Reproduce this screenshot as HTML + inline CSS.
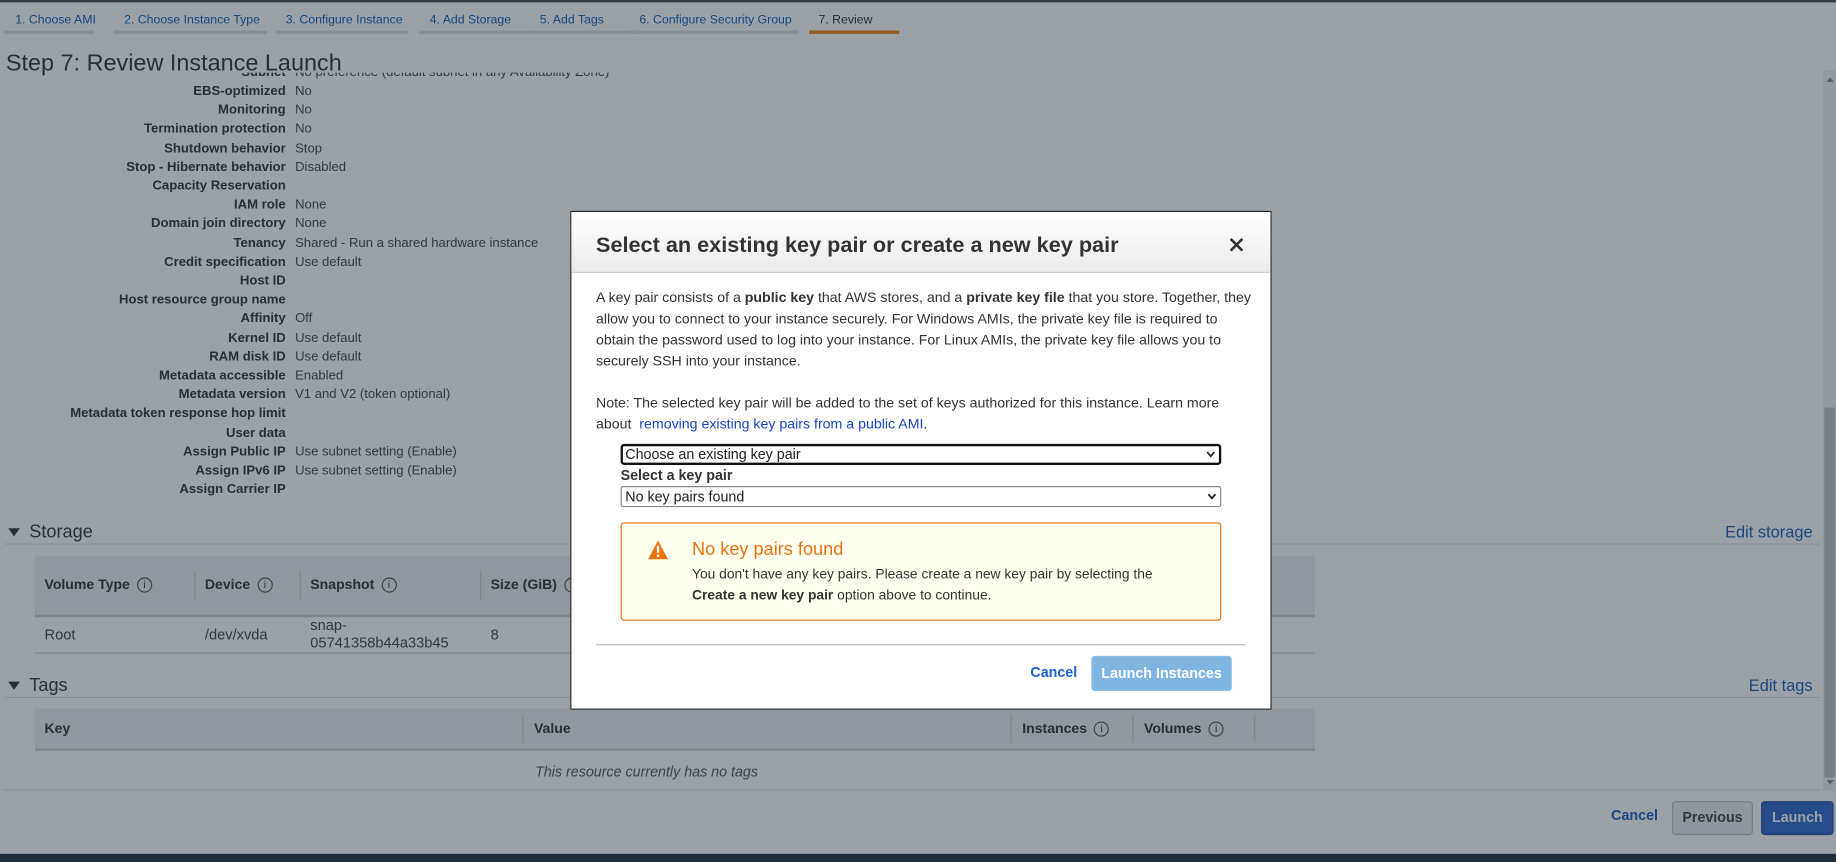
<!DOCTYPE html>
<html><head><meta charset="utf-8"><style>
html,body{margin:0;padding:0;width:1836px;height:862px;overflow:hidden;background:#9ca1a8;}
#w{position:absolute;left:0;top:0;width:1568px;height:736px;transform:scale(1.17092,1.17120);transform-origin:0 0;background:#fff;font-family:"Liberation Sans",Arial,sans-serif;color:#333;overflow:hidden}
.a{position:absolute;white-space:nowrap}
.tab{position:absolute;top:4px;height:25px;border-bottom:3px solid #ddd;font-size:10.5px;color:#0b5fb8;line-height:26px;white-space:nowrap;box-sizing:border-box;padding-left:9px}
.lbl{position:absolute;left:0;width:244px;text-align:right;font-size:11.2px;font-weight:bold;color:#333;white-space:nowrap}
.val{position:absolute;left:252px;font-size:11.2px;color:#444;white-space:nowrap}
.th{position:absolute;font-size:12px;font-weight:bold;color:#333}
.i{display:inline-block;width:11px;height:11px;border:1px solid #555;border-radius:50%;font-size:9px;line-height:11px;text-align:center;font-weight:normal;margin-left:6px;vertical-align:middle}
.sep{position:absolute;width:1px;background:#ccc}
#ov{position:absolute;left:0;top:0;width:1568px;height:736px;background:rgba(30,42,58,.44)}
.m{font-size:12.1px;line-height:18px;color:#333}
</style></head><body><div id="w">
<div class="a" style="left:0;top:0;width:1568px;height:2px;background:#444"></div>
<div class="tab" style="left:3px;width:77px;padding-left:10px">1. Choose AMI</div>
<div class="tab" style="left:97px;width:131px">2. Choose Instance Type</div>
<div class="tab" style="left:236px;width:113px;padding-left:8px">3. Configure Instance</div>
<div class="tab" style="left:358px;width:97px;padding-left:9px">4. Add Storage</div>
<div class="tab" style="left:452px;width:95px;padding-left:9px">5. Add Tags</div>
<div class="tab" style="left:537px;width:145px;padding-left:9px">6. Configure Security Group</div>
<div class="tab" style="left:691px;width:77px;border-bottom-color:#e88b14;color:#333;padding-left:8px">7. Review</div>
<div class="a" style="left:0;top:62px;width:1556px;height:8px;overflow:hidden">
<div class="lbl" style="top:-6px">Subnet</div><div class="val" style="top:-6px">No preference (default subnet in any Availability Zone)</div>
</div>
<div class="a" style="left:5px;top:43px;font-size:20px;color:#333">Step 7: Review Instance Launch</div>
<div class="lbl" style="top:72px">EBS-optimized</div><div class="val" style="top:72px">No</div>
<div class="lbl" style="top:88px">Monitoring</div><div class="val" style="top:88px">No</div>
<div class="lbl" style="top:104px">Termination protection</div><div class="val" style="top:104px">No</div>
<div class="lbl" style="top:121px">Shutdown behavior</div><div class="val" style="top:121px">Stop</div>
<div class="lbl" style="top:137px">Stop - Hibernate behavior</div><div class="val" style="top:137px">Disabled</div>
<div class="lbl" style="top:153px">Capacity Reservation</div>
<div class="lbl" style="top:169px">IAM role</div><div class="val" style="top:169px">None</div>
<div class="lbl" style="top:185px">Domain join directory</div><div class="val" style="top:185px">None</div>
<div class="lbl" style="top:202px">Tenancy</div><div class="val" style="top:202px">Shared - Run a shared hardware instance</div>
<div class="lbl" style="top:218px">Credit specification</div><div class="val" style="top:218px">Use default</div>
<div class="lbl" style="top:234px">Host ID</div>
<div class="lbl" style="top:250px">Host resource group name</div>
<div class="lbl" style="top:266px">Affinity</div><div class="val" style="top:266px">Off</div>
<div class="lbl" style="top:283px">Kernel ID</div><div class="val" style="top:283px">Use default</div>
<div class="lbl" style="top:299px">RAM disk ID</div><div class="val" style="top:299px">Use default</div>
<div class="lbl" style="top:315px">Metadata accessible</div><div class="val" style="top:315px">Enabled</div>
<div class="lbl" style="top:331px">Metadata version</div><div class="val" style="top:331px">V1 and V2 (token optional)</div>
<div class="lbl" style="top:347px">Metadata token response hop limit</div>
<div class="lbl" style="top:364px">User data</div>
<div class="lbl" style="top:380px">Assign Public IP</div><div class="val" style="top:380px">Use subnet setting (Enable)</div>
<div class="lbl" style="top:396px">Assign IPv6 IP</div><div class="val" style="top:396px">Use subnet setting (Enable)</div>
<div class="lbl" style="top:412px">Assign Carrier IP</div>
<!-- storage -->
<div class="a" style="left:7px;top:451px;width:0;height:0;border-left:5px solid transparent;border-right:5px solid transparent;border-top:7px solid #333"></div>
<div class="a" style="left:25px;top:446px;font-size:15.5px;color:#333">Storage</div>
<div class="a" style="right:20px;top:446px;font-size:14px;color:#1a5fb4">Edit storage</div>
<div class="a" style="left:4px;top:464px;width:1550px;height:1px;background:#ddd"></div>
<div class="a" style="left:30px;top:475px;width:1093px;height:50px;background:#eaeded;border-bottom:2px solid #ccc"></div>
<div class="th" style="left:38px;top:492px">Volume Type<span class="i">i</span></div>
<div class="sep" style="left:166px;top:488px;height:24px"></div>
<div class="th" style="left:175px;top:492px">Device<span class="i">i</span></div>
<div class="sep" style="left:256px;top:488px;height:24px"></div>
<div class="th" style="left:265px;top:492px">Snapshot<span class="i">i</span></div>
<div class="sep" style="left:410px;top:488px;height:24px"></div>
<div class="th" style="left:419px;top:492px">Size (GiB)<span class="i">i</span></div>
<div class="a" style="left:38px;top:535px;font-size:12.5px;color:#444">Root</div>
<div class="a" style="left:175px;top:535px;font-size:12.5px;color:#444">/dev/xvda</div>
<div class="a" style="left:265px;top:527px;font-size:12.5px;color:#444;line-height:15px">snap-<br>05741358b44a33b45</div>
<div class="a" style="left:419px;top:535px;font-size:12.5px;color:#444">8</div>
<div class="a" style="left:30px;top:557px;width:1093px;height:1px;background:#ccc"></div>
<!-- tags -->
<div class="a" style="left:7px;top:582px;width:0;height:0;border-left:5px solid transparent;border-right:5px solid transparent;border-top:7px solid #333"></div>
<div class="a" style="left:25px;top:577px;font-size:15.5px;color:#333">Tags</div>
<div class="a" style="right:20px;top:577px;font-size:14px;color:#1a5fb4">Edit tags</div>
<div class="a" style="left:4px;top:595px;width:1550px;height:1px;background:#ddd"></div>
<div class="a" style="left:30px;top:605px;width:1093px;height:34px;background:#eaeded;border-bottom:2px solid #ccc"></div>
<div class="th" style="left:38px;top:615px">Key</div>
<div class="sep" style="left:446px;top:610px;height:24px"></div>
<div class="th" style="left:456px;top:615px">Value</div>
<div class="sep" style="left:863px;top:610px;height:24px"></div>
<div class="th" style="left:873px;top:615px">Instances<span class="i">i</span></div>
<div class="sep" style="left:967px;top:610px;height:24px"></div>
<div class="th" style="left:977px;top:615px">Volumes<span class="i">i</span></div>
<div class="sep" style="left:1071px;top:610px;height:24px"></div>
<div class="a" style="left:457px;top:652px;font-size:12.2px;font-style:italic;color:#555">This resource currently has no tags</div>
<div class="a" style="left:4px;top:674px;width:1550px;height:1px;background:#ddd"></div>
<!-- scrollbar -->
<div class="a" style="left:1557px;top:60px;width:11px;height:615px;background:#f1f1f1"></div>
<div class="a" style="left:1558px;top:348px;width:9px;height:316px;background:#c1c1c1"></div>
<div class="a" style="left:1560px;top:66px;border-left:3px solid transparent;border-right:3px solid transparent;border-bottom:4px solid #888"></div>
<div class="a" style="left:1560px;top:666px;border-left:3px solid transparent;border-right:3px solid transparent;border-top:4px solid #888"></div>
<!-- footer -->
<div class="a" style="left:1376px;top:689px;font-size:12.2px;font-weight:bold;color:#1a5fb4">Cancel</div>
<div class="a" style="left:1428px;top:684px;width:67px;height:27px;border:1px solid #bbb;border-radius:3px;background:#e9ebed;font-size:12.2px;font-weight:bold;color:#444;text-align:center;line-height:27px">Previous</div>
<div class="a" style="left:1504px;top:684px;width:60px;height:27px;border:1px solid #1f4f9c;border-radius:3px;background:#2c67c7;font-size:12.2px;font-weight:bold;color:#fff;text-align:center;line-height:27px">Launch</div>
<div class="a" style="left:0;top:729px;width:1568px;height:7px;background:#232f3e"></div>
<div id="ov"></div>
<!-- modal -->
<div class="a" style="left:487px;top:180px;width:597px;height:424px;background:#fff;border:1px solid #222;white-space:normal">
<div style="position:absolute;left:0;top:0;width:597px;height:51px;background:linear-gradient(#fff,#ececec);border-bottom:1px solid #ccc"></div>
<div class="a" style="left:21px;top:17px;font-size:18.5px;font-weight:bold;color:#333">Select an existing key pair or create a new key pair</div>
<svg style="position:absolute;left:562px;top:22px" width="12" height="12" viewBox="0 0 12 12"><path d="M1 1L11 11M11 1L1 11" stroke="#333" stroke-width="2.2"/></svg>
<div class="m" style="position:absolute;left:21px;top:64px;width:560px">A key pair consists of a <b>public key</b> that AWS stores, and a <b>private key file</b> that you store. Together, they allow you to connect to your instance securely. For Windows AMIs, the private key file is required to obtain the password used to log into your instance. For Linux AMIs, the private key file allows you to securely SSH into your instance.</div>
<div class="m" style="position:absolute;left:21px;top:154px;width:560px">Note: The selected key pair will be added to the set of keys authorized for this instance. Learn more about &nbsp;<span style="color:#1a44c4">removing existing key pairs from a public AMI</span>.</div>
<div class="a" style="left:42px;top:198px;width:507px;height:14px;border:2px solid #111;border-radius:3px;font-size:12.2px;line-height:14px;padding-left:2px;color:#222">Choose an existing key pair<svg style="position:absolute;right:3px;top:4px" width="8" height="6" viewBox="0 0 8 6"><path d="M1 1L4 4.5L7 1" stroke="#222" stroke-width="1.5" fill="none"/></svg></div>
<div class="a" style="left:42px;top:218px;font-size:12.2px;font-weight:bold;color:#333">Select a key pair</div>
<div class="a" style="left:42px;top:234px;border:1px solid #888;border-radius:2px;font-size:12.2px;line-height:16px;padding-left:3px;color:#222;box-sizing:border-box;width:513px;height:18px">No key pairs found<svg style="position:absolute;right:3px;top:5px" width="8" height="6" viewBox="0 0 8 6"><path d="M1 1L4 4.5L7 1" stroke="#222" stroke-width="1.5" fill="none"/></svg></div>
<div class="a" style="left:42px;top:265px;width:511px;height:82px;border:1px solid #ec7211;border-radius:3px;background:#fffff0">
<svg style="position:absolute;left:22px;top:14px" width="18" height="17" viewBox="0 0 18 17"><path d="M9 0.5 L17.5 16.5 L0.5 16.5 Z" fill="#ec7211"/><rect x="8" y="5" width="2" height="6" fill="#fff"/><rect x="8" y="12.5" width="2" height="2" fill="#fff"/></svg>
<div class="a" style="left:60px;top:14px;font-size:15.5px;color:#ec7211">No key pairs found</div>
<div class="m" style="position:absolute;left:60px;top:34px;width:430px;white-space:normal;font-size:11.8px">You don't have any key pairs. Please create a new key pair by selecting the <b>Create a new key pair</b> option above to continue.</div>
</div>
<div class="a" style="left:21px;top:369px;width:555px;height:1px;background:#bbb"></div>
<div class="a" style="left:392px;top:386px;font-size:12.2px;font-weight:bold;color:#1a5fd4">Cancel</div>
<div class="a" style="left:444px;top:379px;width:118px;height:28px;border:1px solid #8bbde0;border-radius:3px;background:#7fb5e1;font-size:12.2px;font-weight:bold;color:#fff;text-align:center;line-height:28px">Launch Instances</div>
</div>
</div></body></html>
